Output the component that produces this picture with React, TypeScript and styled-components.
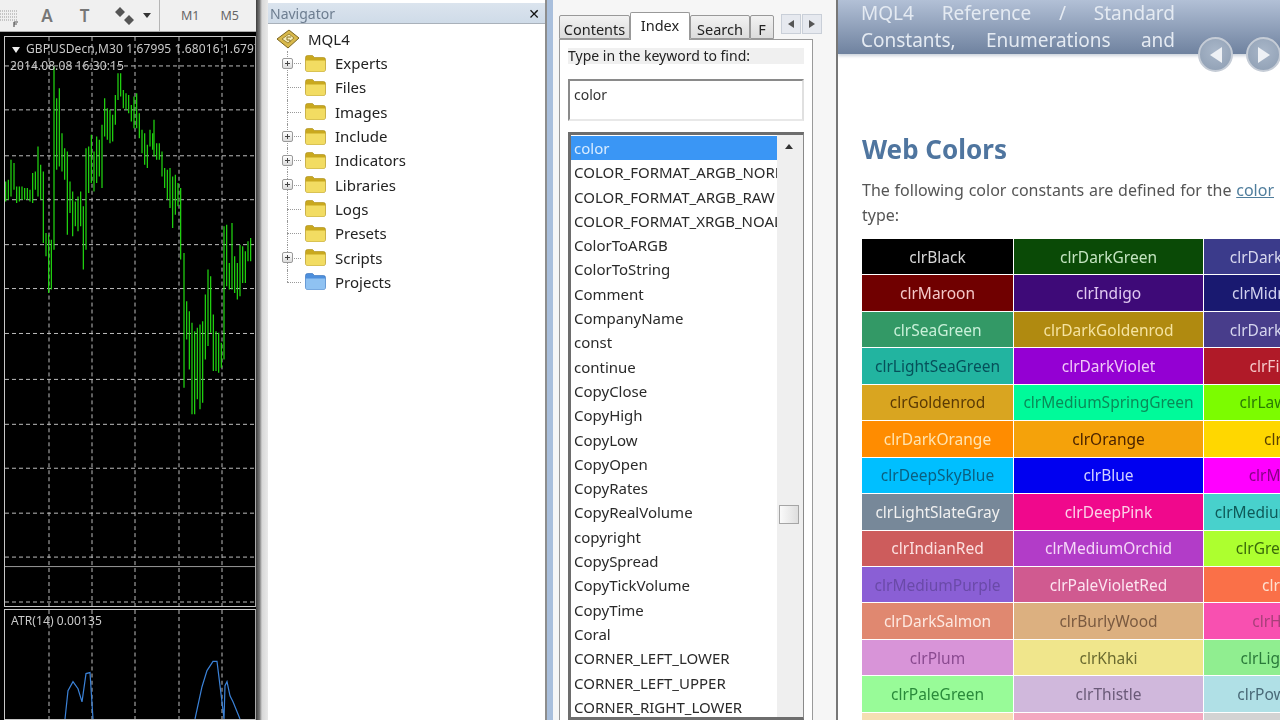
import React from 'react'
import styled, { createGlobalStyle } from 'styled-components'

const GlobalStyle = createGlobalStyle`
  html, body {
    margin: 0;
    padding: 0;
    background: #f0f0f0;
    overflow: hidden;
  }
`

const uiFont = `"Noto Sans", "DejaVu Sans", sans-serif`
const helpFont = `"Noto Sans", "Open Sans", sans-serif`

const Page = styled.div`
  display: flex;
  width: 1280px;
  height: 720px;
  overflow: hidden;
  font-family: ${uiFont};
  filter: blur(0.45px);
`

/* ---------- terminal chart ---------- */

const ChartColumn = styled.div`
  display: flex;
  flex-direction: column;
  width: 256px;
  flex: none;
`

const Toolbar = styled.div`
  display: flex;
  align-items: center;
  height: 32px;
  flex: none;
  background: #f0f0f0;
  color: #6e6e6e;
  border-bottom: 1px solid #aaa;
  box-sizing: border-box;
  overflow: hidden;
  white-space: nowrap;
`

const ToolLetter = styled.span<{ $width: number }>`
  width: ${p => p.$width}px;
  flex: none;
  text-align: center;
  font-size: 17px;
  font-weight: 600;
  color: #777;
`

const ToolIcon = styled.svg<{ $left: number }>`
  flex: none;
  margin-left: ${p => p.$left}px;
`

const ToolDivider = styled.div`
  width: 1px;
  height: 32px;
  flex: none;
  margin-left: 8px;
  background: #b5b5b5;
`

const Period = styled.span`
  flex: none;
  margin-left: 21px;
  font-size: 12.5px;
  color: #666;
`

const ChartFrame = styled.div`
  flex: 1;
  display: flex;
  flex-direction: column;
  gap: 2px;
  min-height: 0;
  background: #000;
  padding: 4px 0 0 4px;
`

const ChartWindow = styled.div<{ $height?: number }>`
  position: relative;
  flex: ${p => (p.$height ? `0 0 ${p.$height}px` : '1')};
  min-height: 0;
  background: #000;
  border: 1px solid #c8c8c8;
  border-right-color: #aaa;
  box-sizing: border-box;
  overflow: hidden;
`

const ChartSvg = styled.svg`
  display: block;
  width: 100%;
  height: 100%;
`

const ChartLabel = styled.div<{ $top: number; $left: number }>`
  position: absolute;
  top: ${p => p.$top}px;
  left: ${p => p.$left}px;
  font-size: 12px;
  line-height: 14px;
  color: #c9c9c9;
  white-space: nowrap;
  letter-spacing: 0.1px;
`

const Marker = styled.span`
  display: inline-block;
  width: 0;
  height: 0;
  margin-right: 6px;
  border-left: 4px solid transparent;
  border-right: 4px solid transparent;
  border-top: 6px solid #eee;
`

const Splitter = styled.div`
  width: 12px;
  flex: none;
  background: linear-gradient(90deg, #3c3c3c 0, #777 30%, #d8d8d8 50%, #e9e9e9 100%);
`

// x, top, bottom in page pixels x3 (read straight off the reference zoom)
const bars: number[][] = [
  [17, 545, 605], [25, 540, 600], [33, 480, 590], [42, 490, 570], [50, 560, 610], [58, 560, 605],
  [66, 560, 600], [74, 565, 600], [82, 565, 600], [90, 570, 605], [98, 520, 610], [106, 515, 570],
  [114, 440, 590], [122, 495, 600], [130, 515, 730], [138, 700, 770], [146, 705, 880], [154, 720, 870],
  [162, 200, 750], [170, 295, 510], [178, 265, 500], [186, 400, 515], [194, 445, 540], [202, 455, 705],
  [210, 545, 640], [218, 575, 710], [226, 605, 680], [234, 590, 695], [242, 575, 680], [250, 620, 810],
  [258, 445, 750], [266, 440, 580], [274, 405, 550], [282, 455, 575], [290, 410, 550], [298, 420, 530],
  [306, 375, 565], [314, 295, 410], [322, 325, 420], [330, 330, 430], [338, 345, 425], [346, 285, 375],
  [354, 220, 300], [362, 220, 290], [370, 270, 325], [378, 280, 330], [386, 285, 340], [394, 315, 365],
  [402, 290, 385], [410, 280, 385], [418, 340, 415], [426, 390, 460], [434, 400, 495], [442, 435, 505],
  [450, 390, 440], [458, 400, 450], [462, 360, 470], [470, 430, 480], [478, 430, 480], [486, 455, 530],
  [494, 505, 565], [502, 510, 600], [510, 505, 625], [518, 530, 685], [526, 525, 645], [534, 550, 620],
  [542, 565, 780], [552, 760, 1165], [560, 905, 1020], [568, 935, 1110], [576, 970, 1245], [584, 995, 1245],
  [592, 985, 1200], [600, 975, 1230], [608, 965, 1210], [616, 885, 1080], [624, 810, 1040], [632, 830, 1000],
  [640, 945, 1115], [648, 995, 1115], [656, 1000, 1120], [664, 1030, 1105], [672, 680, 1080], [680, 675, 860],
  [688, 790, 870], [696, 670, 870], [704, 770, 880], [712, 790, 900], [720, 735, 890], [728, 740, 850],
  [736, 755, 850], [744, 725, 785], [752, 715, 785],
]

const gridX = [49, 92, 135, 179, 222]
const gridY = [66, 110, 156, 200, 245, 289, 334, 380, 425, 469, 514, 558, 603]

function Grid({ top, bottom }: { top: number; bottom: number }) {
  return (
    <g stroke="#bdbdbd" strokeWidth="1" strokeDasharray="4 3">
      {gridX.map(x => <line key={x} x1={x} x2={x} y1={top} y2={bottom} />)}
      {gridY.filter(y => y > top && y < bottom).map(y => <line key={y} x1="5" x2="256" y1={y} y2={y} />)}
    </g>
  )
}

function PriceChart() {
  return (
    <ChartSvg viewBox="5 37 250 570" preserveAspectRatio="none">
      <Grid top={37} bottom={607} />
      <line x1="5" x2="256" y1="567.5" y2="567.5" stroke="#9a9a9a" />
      <g stroke="#22dd11" strokeWidth="1.2">
        {bars.map(([x, a, b]) => (
          <line key={x} x1={x / 3} x2={x / 3} y1={a / 3} y2={b / 3} />
        ))}
      </g>
    </ChartSvg>
  )
}

const atrA = '65,720 68,692 73,683 78,690 82,703 86,675 90,674 93,720'
const atrB = '195,720 202,688 207,672 213,663 217,663 222,703 224,720 225,687 227,683 230,697 233,703 240,720'

function AtrChart() {
  return (
    <ChartSvg viewBox="5 612 250 108" preserveAspectRatio="none">
      <Grid top={612} bottom={720} />
      <g fill="none" stroke="#3b82d8" strokeWidth="1.2">
        <polyline points={atrA} />
        <polyline points={atrB} />
      </g>
    </ChartSvg>
  )
}

/* ---------- navigator ---------- */

const NavigatorPanel = styled.div`
  width: 277px;
  flex: none;
  display: flex;
  flex-direction: column;
  background: #fff;
  border-right: 2px solid #8d8d8d;
  box-sizing: content-box;
`

const NavigatorHead = styled.div`
  display: flex;
  align-items: center;
  justify-content: space-between;
  height: 20px;
  margin-top: 3px;
  padding: 0 5px 0 2px;
  background: linear-gradient(180deg, #dbe4ee, #cfdbe8);
  border-bottom: 1px solid #a9b1ba;
  font-size: 14px;
  color: #6d7d90;
`

const CloseGlyph = styled.span`
  font-size: 14px;
  font-weight: 700;
  color: #111;
`

const Tree = styled.div`
  padding: 3px 0 0 8px;
  font-size: 15px;
  color: #222;
`

const TreeRoot = styled.div`
  display: flex;
  align-items: center;
  gap: 8px;
  height: 24px;
`

const TreeRow = styled.div`
  display: flex;
  align-items: center;
  height: 24.3px;
`

const Branch = styled.span<{ $last?: boolean }>`
  position: relative;
  align-self: stretch;
  width: 29px;
  flex: none;
  &::before {
    content: '';
    position: absolute;
    left: 11px;
    top: 0;
    height: ${p => (p.$last ? '50%' : '100%')};
    border-left: 1px dotted #999;
  }
  &::after {
    content: '';
    position: absolute;
    left: 11px;
    right: 4px;
    top: 50%;
    border-top: 1px dotted #999;
  }
`

const Expander = styled.span`
  position: absolute;
  z-index: 1;
  left: 6px;
  top: 7px;
  width: 9px;
  height: 9px;
  border: 1px solid #9a9a9a;
  border-radius: 2px;
  background: linear-gradient(180deg, #fff, #dcdcdc);
  &::before {
    content: '';
    position: absolute;
    left: 2px;
    right: 2px;
    top: 4px;
    height: 1px;
    background: #444;
  }
  &::after {
    content: '';
    position: absolute;
    top: 2px;
    bottom: 2px;
    left: 4px;
    width: 1px;
    background: #444;
  }
`

const FolderName = styled.span`
  margin-left: 9px;
`

function Folder({ blue }: { blue?: boolean }) {
  const back = blue ? '#4d8fdc' : '#c9a81e'
  const front = blue ? '#8fc2f2' : '#f2dc62'
  const edge = blue ? '#2f6db8' : '#a98c14'
  return (
    <svg width="21" height="17" viewBox="0 0 21 17">
      <path d="M.5 2.5q0-2 2-2h5l2 2h9q2 0 2 2v10q0 2-2 2h-16q-2 0-2-2z" fill={back} stroke={edge} strokeWidth=".6" />
      <path d="M.8 5.5h19.4v9q0 2-2 2H2.8q-2 0-2-2z" fill={front} />
    </svg>
  )
}

function RootIcon() {
  return (
    <svg width="24" height="20" viewBox="0 0 24 20">
      <path d="M1 10 13 1l10 8-11 10z" fill="#d8b84a" stroke="#7a6420" strokeWidth="1" />
      <path d="M6 10 13 5l5 4-6 5z" fill="#f6ecb8" stroke="#8a7428" strokeWidth=".8" />
      <path d="M11 8h4M11 8v3h3v2" fill="none" stroke="#8a7428" />
    </svg>
  )
}

const folders = [
  { name: 'Experts', open: true },
  { name: 'Files' },
  { name: 'Images' },
  { name: 'Include', open: true },
  { name: 'Indicators', open: true },
  { name: 'Libraries', open: true },
  { name: 'Logs' },
  { name: 'Presets' },
  { name: 'Scripts', open: true },
  { name: 'Projects', blue: true },
]

/* ---------- help index pane ---------- */

const IndexPane = styled.div`
  width: 291px;
  flex: none;
  display: flex;
  flex-direction: column;
  box-sizing: border-box;
  padding-left: 12px;
  background: linear-gradient(90deg, #a9bfdc 0, #a9bfdc 6px, #f6f6f6 6px);
  border-right: 2px solid #777;
`

const TabStrip = styled.div`
  position: relative;
  display: flex;
  align-items: flex-end;
  height: 39px;
  flex: none;
  padding-right: 26px;
  font-size: 14.5px;
  color: #222;
`

const Tab = styled.div<{ $active?: boolean; $width: number }>`
  width: ${p => p.$width}px;
  height: ${p => (p.$active ? 28 : 24)}px;
  flex: none;
  box-sizing: border-box;
  padding-top: ${p => (p.$active ? 2 : 3)}px;
  margin-bottom: ${p => (p.$active ? -1 : 0)}px;
  text-align: center;
  line-height: 20px;
  overflow: hidden;
  background: ${p => (p.$active ? '#fff' : 'linear-gradient(180deg, #f2f2f2, #dcdcdc)')};
  border: 1px solid #999;
  border-bottom: ${p => (p.$active ? 'none' : '1px solid #999')};
  border-radius: 2px 2px 0 0;
  z-index: ${p => (p.$active ? 1 : 0)};
`

const TabArrows = styled.div`
  position: absolute;
  top: 14px;
  right: 14px;
  display: flex;
  gap: 1px;
`

const TabArrow = styled.div`
  display: flex;
  align-items: center;
  justify-content: center;
  width: 20px;
  height: 20px;
  border: 1px solid #c9cfd8;
  box-sizing: border-box;
  background: #e6e9ef;
`

const TabBody = styled.div`
  flex: 1;
  min-height: 0;
  display: flex;
  flex-direction: column;
  width: 254px;
  box-sizing: border-box;
  padding: 8px 8px 0;
  background: #fff;
  border: 1px solid #9a9a9a;
  border-bottom: none;
`

const KeywordLabel = styled.div`
  height: 16px;
  line-height: 16px;
  padding-top: 0;
  background: #f0f0f0;
  font-size: 14px;
  color: #222;
  white-space: nowrap;
`

const KeywordInput = styled.div`
  height: 42px;
  margin-top: 15px;
  padding: 4px 4px;
  box-sizing: border-box;
  border: 2px solid;
  border-color: #8a8a8a #e0e0e0 #e8e8e8 #8a8a8a;
  background: #fff;
  font-size: 14px;
  line-height: 20px;
  color: #333;
`

const KeywordList = styled.div`
  flex: 1;
  min-height: 0;
  display: flex;
  margin-top: 11px;
  border: 3px solid;
  border-color: #6d6d6d #8a8a8a #6d6d6d #6d6d6d;
  border-right-width: 1px;
  overflow: hidden;
`

const ListRows = styled.div`
  flex: 1;
  min-width: 0;
  padding-top: 1px;
  overflow: hidden;
`

const ListRow = styled.div<{ $selected?: boolean }>`
  height: 24.3px;
  line-height: 24px;
  padding-left: 3px;
  font-size: 15px;
  white-space: nowrap;
  overflow: hidden;
  color: ${p => (p.$selected ? '#d8ecff' : '#2a2a2a')};
  background: ${p => (p.$selected ? '#3a96f5' : 'transparent')};
`

const ScrollTrack = styled.div`
  position: relative;
  width: 26px;
  flex: none;
  background: #efefef;
`

const ScrollUp = styled.div`
  position: absolute;
  top: 9px;
  left: 8px;
  border-left: 4px solid transparent;
  border-right: 4px solid transparent;
  border-bottom: 5px solid #333;
`

const ScrollThumb = styled.div`
  position: absolute;
  top: 370px;
  left: 2px;
  width: 20px;
  height: 19px;
  box-sizing: border-box;
  border: 1px solid #a5a5a5;
  background: linear-gradient(90deg, #fafafa, #dedede);
`

const keywords = [
  'color', 'COLOR_FORMAT_ARGB_NORMALIZE', 'COLOR_FORMAT_ARGB_RAW', 'COLOR_FORMAT_XRGB_NOALPHA',
  'ColorToARGB', 'ColorToString', 'Comment', 'CompanyName', 'const', 'continue', 'CopyClose',
  'CopyHigh', 'CopyLow', 'CopyOpen', 'CopyRates', 'CopyRealVolume', 'copyright', 'CopySpread',
  'CopyTickVolume', 'CopyTime', 'Coral', 'CORNER_LEFT_LOWER', 'CORNER_LEFT_UPPER', 'CORNER_RIGHT_LOWER',
  'CORNER_RIGHT_UPPER',
]

/* ---------- help page ---------- */

const HelpPage = styled.div`
  position: relative;
  flex: 1;
  min-width: 0;
  margin-left: 0;
  background: #fff;
  overflow: hidden;
  font-family: ${helpFont};
`

const HelpHeader = styled.div`
  height: 54px;
  padding: 0 0 0 23px;
  box-sizing: border-box;
  background: linear-gradient(180deg, #b2c0d6, #6f829f);
  box-shadow: 0 2px 3px #ccd3dc;
`

const Crumb = styled.div`
  width: 314px;
  height: 27px;
  line-height: 27px;
  font-size: 19px;
  color: #e4eaf2;
  text-align: justify;
  text-align-last: justify;
`

const PagerButtons = styled.div`
  position: absolute;
  top: 37px;
  left: 360px;
  display: flex;
  gap: 13px;
`

const PagerButton = styled.div`
  display: flex;
  align-items: center;
  justify-content: center;
  width: 35px;
  height: 35px;
  flex: none;
  border-radius: 50%;
  box-sizing: border-box;
  border: 2px solid #c5ccd6;
  background: radial-gradient(circle at 50% 40%, #a9b7c9, #8d9db2);
`

const HelpBody = styled.div`
  padding: 78px 0 0 24px;
  width: 436px;
  box-sizing: border-box;
`

const Heading = styled.h1`
  margin: 0;
  font-size: 26px;
  line-height: 34px;
  font-weight: 700;
  color: #4f759f;
`

const Intro = styled.p`
  margin: 12px 0 0;
  width: 412px;
  font-size: 16px;
  line-height: 25px;
  color: #555;
  text-align: justify;
`

const TypeLink = styled.a`
  color: #4f7d9c;
  text-decoration: underline;
`

const ColorGrid = styled.div`
  display: grid;
  grid-template-columns: 151px 189px 172px;
  grid-auto-rows: 35.45px;
  gap: 1px;
  margin-top: 11px;
  width: 514px;
`

const ColorCell = styled.div<{ $bg: string; $fg: string }>`
  display: flex;
  align-items: center;
  justify-content: center;
  font-size: 15.5px;
  white-space: nowrap;
  overflow: hidden;
  background: ${p => p.$bg};
  color: ${p => p.$fg};
`

const colors: [string, string, string][][] = [
  [['clrBlack', '#000', '#d8d8d8'], ['clrDarkGreen', '#0a4a06', '#c4e4c0'], ['clrDarkSlateBlue', '#3b3b8b', '#d8d8ee']],
  [['clrMaroon', '#700000', '#f5c8c8'], ['clrIndigo', '#3e0a78', '#e0c8f0'], ['clrMidnightBlue', '#191970', '#d0d0ee']],
  [['clrSeaGreen', '#339966', '#c8f0d8'], ['clrDarkGoldenrod', '#b08a10', '#f5e3a0'], ['clrDarkSlateBlue', '#483d8b', '#d5d5ee']],
  [['clrLightSeaGreen', '#22b4a0', '#06505a'], ['clrDarkViolet', '#9400d3', '#f0c8f8'], ['clrFireBrick', '#b01a28', '#f5c8c8']],
  [['clrGoldenrod', '#d9a520', '#5a3a05'], ['clrMediumSpringGreen', '#00fa9a', '#0a8a58'], ['clrLawnGreen', '#7cfc00', '#2a7a05']],
  [['clrDarkOrange', '#ff8c00', '#ffe4b0'], ['clrOrange', '#f5a20a', '#4a2300'], ['clrGold', '#ffd700', '#5a4000']],
  [['clrDeepSkyBlue', '#00bfff', '#0a5f80'], ['clrBlue', '#0000f0', '#d0d0ff'], ['clrMagenta', '#ff00ff', '#8a0088']],
  [['clrLightSlateGray', '#778899', '#f0f0f0'], ['clrDeepPink', '#f0088c', '#fcd0e8'], ['clrMediumTurquoise', '#48d1cc', '#0e5a58']],
  [['clrIndianRed', '#cd5c5c', '#fce0e0'], ['clrMediumOrchid', '#b23cc8', '#f5d8f8'], ['clrGreenYellow', '#adff2f', '#3a6a0a']],
  [['clrMediumPurple', '#8a5fd5', '#6a4aa8'], ['clrPaleVioletRed', '#d05a90', '#fce4f0'], ['clrCoral', '#fa7048', '#fde0d0']],
  [['clrDarkSalmon', '#e08870', '#fde8e0'], ['clrBurlyWood', '#dcb080', '#7a5a40'], ['clrHotPink', '#f850b0', '#a8407a']],
  [['clrPlum', '#d894d8', '#8a4a90'], ['clrKhaki', '#f0e68c', '#6a6a30'], ['clrLightGreen', '#90ee90', '#2a7a3a']],
  [['clrPaleGreen', '#98fb98', '#2a8a3a'], ['clrThistle', '#d0b8dc', '#6a5a78'], ['clrPowderBlue', '#b0e0e6', '#4a6a78']],
  [['clrWheat', '#f5deb3', '#7a6a40'], ['clrLightPink', '#f4a8c0', '#8a4a60'], ['clrLightGray', '#d3d3d3', '#666']],
]

function App() {
  return (
    <Page>
      <GlobalStyle />
      <ChartColumn>
        <Toolbar>
          <ToolIcon $left={0} width="19" height="24" viewBox="0 0 19 24">
            <path d="M0 7h18M0 10h18M0 13h18M0 16h18" stroke="#999" strokeDasharray="1 1" />
            <path d="M14 18h4M14 18v5M14 20h3" stroke="#555" strokeWidth="1.2" fill="none" />
          </ToolIcon>
          <ToolLetter $width={56}>A</ToolLetter>
          <ToolLetter $width={19}>
            T
          </ToolLetter>
          <ToolIcon $left={20} width="21" height="20" viewBox="0 0 21 20">
            <path d="M1 6l5-5 5 5-5 5zM10 14l5-5 5 5-5 5z" fill="#555" />
          </ToolIcon>
          <ToolIcon $left={8} width="8" height="5" viewBox="0 0 8 5">
            <path d="M0 0h8L4 5z" fill="#333" />
          </ToolIcon>
          <ToolDivider />
          <Period>M1</Period>
          <Period>M5</Period>
          <Period>M15</Period>
        </Toolbar>
        <ChartFrame>
          <ChartWindow $height={571}>
            <PriceChart />
            <ChartLabel $top={5} $left={7}><Marker />GBPUSDecn,M30  1.67995 1.68016 1.67973 1.67999</ChartLabel>
            <ChartLabel $top={22} $left={5}>2014.08.08 16:30:15</ChartLabel>
          </ChartWindow>
          <ChartWindow>
            <AtrChart />
            <ChartLabel $top={4} $left={6}>ATR(14) 0.00135</ChartLabel>
          </ChartWindow>
        </ChartFrame>
      </ChartColumn>
      <Splitter />
      <NavigatorPanel>
        <NavigatorHead>
          Navigator
          <CloseGlyph>✕</CloseGlyph>
        </NavigatorHead>
        <Tree>
          <TreeRoot>
            <RootIcon />
            MQL4
          </TreeRoot>
          {folders.map((f, i) => (
            <TreeRow key={f.name}>
              <Branch $last={i === folders.length - 1}>
                {f.open && <Expander />}
              </Branch>
              <Folder blue={f.blue} />
              <FolderName>{f.name}</FolderName>
            </TreeRow>
          ))}
        </Tree>
      </NavigatorPanel>
      <IndexPane>
        <TabStrip>
          <Tab $width={71}>Contents</Tab>
          <Tab $active $width={60}>Index</Tab>
          <Tab $width={60}>Search</Tab>
          <Tab $width={24}>F</Tab>
          <TabArrows>
            <TabArrow>
              <svg width="6" height="8" viewBox="0 0 6 8"><path d="M6 0v8L0 4z" fill="#555" /></svg>
            </TabArrow>
            <TabArrow>
              <svg width="6" height="8" viewBox="0 0 6 8"><path d="M0 0v8l6-4z" fill="#555" /></svg>
            </TabArrow>
          </TabArrows>
        </TabStrip>
        <TabBody>
          <KeywordLabel>Type in the keyword to find:</KeywordLabel>
          <KeywordInput>color</KeywordInput>
          <KeywordList>
            <ListRows>
              {keywords.map((k, i) => (
                <ListRow key={k} $selected={i === 0}>{k}</ListRow>
              ))}
            </ListRows>
            <ScrollTrack>
              <ScrollUp />
              <ScrollThumb />
            </ScrollTrack>
          </KeywordList>
        </TabBody>
      </IndexPane>
      <HelpPage>
        <HelpHeader>
          <Crumb>MQL4 Reference / Standard</Crumb>
          <Crumb>Constants, Enumerations and</Crumb>
        </HelpHeader>
        <PagerButtons>
          <PagerButton>
            <svg width="12" height="16" viewBox="0 0 12 16"><path d="M12 0v16L0 8z" fill="#eef1f5" /></svg>
          </PagerButton>
          <PagerButton>
            <svg width="12" height="16" viewBox="0 0 12 16"><path d="M0 0v16l12-8z" fill="#eef1f5" /></svg>
          </PagerButton>
        </PagerButtons>
        <HelpBody>
          <Heading>Web Colors</Heading>
          <Intro>
            The following color constants are defined for the <TypeLink>color</TypeLink> type:
          </Intro>
          <ColorGrid>
            {colors.flat().map(([name, bg, fg], i) => (
              <ColorCell key={i} $bg={bg} $fg={fg}>{name}</ColorCell>
            ))}
          </ColorGrid>
        </HelpBody>
      </HelpPage>
    </Page>
  )
}

export default App
